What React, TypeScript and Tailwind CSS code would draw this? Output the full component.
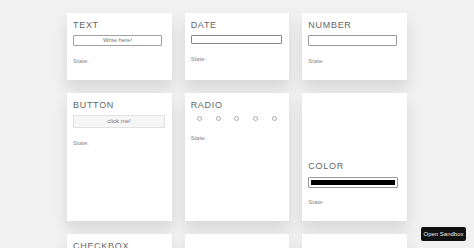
import React from "react";

const font = { fontFamily: '"Liberation Sans", Arial, Helvetica, sans-serif' };

function Card({ children, className = "" }: { children: React.ReactNode; className?: string }) {
  return (
    <div
      className={`bg-white flex flex-col px-[6px] pt-[6px] pb-[15px] shadow-[0_9px_14px_rgba(0,0,0,0.11)] ${className}`}
    >
      {children}
    </div>
  );
}

function Title({ children }: { children: React.ReactNode }) {
  return (
    <div className="text-[9px] leading-[12px] tracking-[0.7px] text-[#666] uppercase">{children}</div>
  );
}

function State({ mt = "mt-[11px]" }: { mt?: string }) {
  return <div className={`${mt} text-[6px] leading-[8px] text-[#888]`}>State:</div>;
}

export default function App() {
  return (
    <div className="min-h-screen bg-[#f1f1f1]" style={font}>
      <div className="w-[340px] mx-auto pt-[13px] grid grid-cols-3 gap-[13px]">
        <Card className="h-[67px]">
          <Title>Text</Title>
          <div className="mt-[4px] w-[89px] h-[11px] border border-[#a0a0a0] rounded-[1px] flex items-center justify-center text-[6px] text-[#777]">
            Write here!
          </div>
          <State />
        </Card>
        <Card className="h-[67px]">
          <Title>Date</Title>
          <div className="mt-[4px] w-[91px] h-[9px] border border-[#888] rounded-[1px]" />
          <State />
        </Card>
        <Card className="h-[67px]">
          <Title>Number</Title>
          <div className="mt-[4px] w-[89px] h-[11px] border border-[#999] rounded-[1px]" />
          <State />
        </Card>

        <Card className="h-[128px]">
          <Title>Button</Title>
          <div className="mt-[4px] w-[92px] h-[13px] bg-[#f6f6f6] border border-[#e2e2e2] flex items-center justify-center text-[6px] text-[#777]">
            click me!
          </div>
          <State />
        </Card>
        <Card className="h-[128px]">
          <Title>Radio</Title>
          <div className="mt-[4px] h-[6px] flex justify-around items-center">
            {[0, 1, 2, 3, 4].map((i) => (
              <span key={i} className="w-[5px] h-[5px] rounded-full border border-[#aaa] bg-white" />
            ))}
          </div>
          <State mt="mt-[13px]" />
        </Card>
        <Card className="h-[128px] justify-end">
          <Title>Color</Title>
          <div className="mt-[5px] w-[90px] h-[11px] border border-[#999] rounded-[1px] p-[2px] bg-white">
            <div className="w-full h-full bg-black" />
          </div>
          <State mt="mt-[10px]" />
        </Card>

        <Card className="h-[67px]">
          <Title>Checkbox</Title>
          <div className="mt-[4px] w-[6px] h-[6px] border border-[#999]" />
          <State />
        </Card>
        <Card className="h-[128px] justify-end">
          <Title>Select</Title>
          <div className="mt-[4px] w-[91px] h-[11px] border border-[#999]" />
          <State />
        </Card>
        <Card className="h-[128px] justify-end">
          <Title>Range</Title>
          <div className="mt-[4px] w-[89px] h-[3px] bg-[#ccc] rounded" />
          <State />
        </Card>
      </div>
      <div className="fixed right-[8px] bottom-[7px] w-[45px] h-[14px] bg-[#111] rounded-[2px] flex items-center justify-center text-[6px] text-[#eee]">
        Open Sandbox
      </div>
    </div>
  );
}
